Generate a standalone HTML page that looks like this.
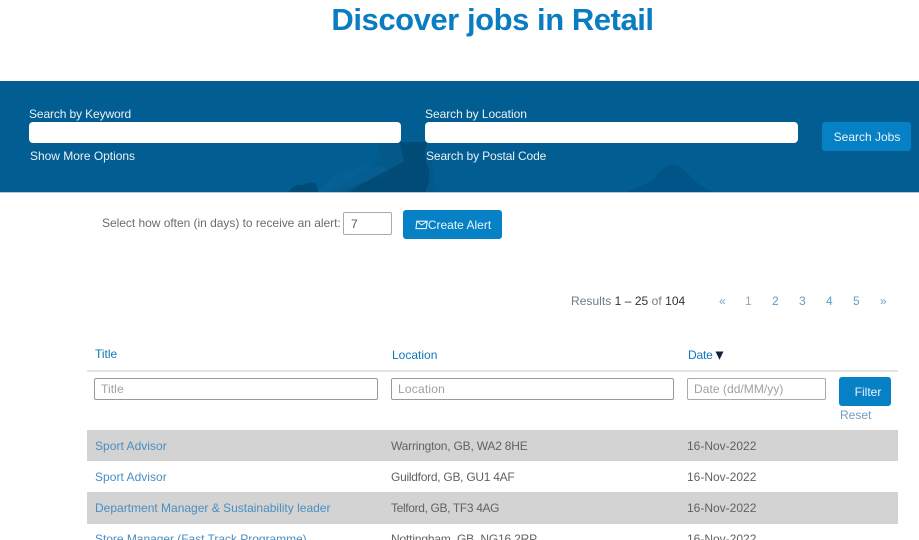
<!DOCTYPE html>
<html lang="en">
<head>
<meta charset="utf-8">
<title>Discover jobs in Retail</title>
<style>
html,body{margin:0;padding:0;background:#fff;width:919px;height:540px;overflow:hidden}
body{position:relative;font-family:"Liberation Sans",sans-serif;font-size:12px;color:#555}
.a{position:absolute;white-space:nowrap;line-height:16px}
.box{position:absolute;box-sizing:border-box}
.w{color:#e8f0f5}
.l{color:#4a8ec2}
.h{color:#0f78b8}
.p{color:#a0a0a0}
.d{color:#626262}
.btn{position:absolute;box-sizing:border-box;background:#0781c5;border-radius:3px;color:#eaf4fa;text-align:center}
.inp{position:absolute;box-sizing:border-box;background:#fff;border:1px solid #999;border-radius:2px}
.row{position:absolute;left:87px;width:811px;background:#d3d3d3}
</style>
</head>
<body>
<div class="a" style="left:0;width:985px;top:0;height:40px;line-height:40px;text-align:center;font-size:31px;font-weight:bold;color:#0a7dc2;letter-spacing:-.45px">Discover jobs in Retail</div>

<div class="box" style="left:0;top:81px;width:919px;height:112px;background:#025e92;overflow:hidden;border-bottom:1px solid #b8c8d4">
<svg width="919" height="111" style="position:absolute;left:0;top:0" viewBox="0 81 919 111">
<path d="M378 142 L430 142 L436 192 L330 192 C345 178 365 172 380 160Z" fill="#02527f" opacity=".4"/>
<path d="M330 178 C345 170 365 164 385 166 L392 176 C372 178 350 186 340 192 L318 192Z" fill="#0d6a9c" opacity=".3"/>
<path d="M400 142 L427 142 C425 150 424 156 426 162 C431 172 430 182 425 192 L350 192 C362 182 385 172 404 162 C403 155 401 150 400 142Z" fill="#023f68" opacity=".55"/>
<path d="M289 192 C292 186 298 184 304 185 C308 182 314 181 317 185 L318 192Z" fill="#023f68" opacity=".6"/>
<path d="M627 192 C640 186 648 183 655 178 C660 168 668 164 676 165 C684 168 690 176 696 182 C703 186 708 190 714 192Z" fill="#024f80" opacity=".6"/>
</svg>
</div>

<div class="a w" style="left:29px;top:106px;letter-spacing:-.12px">Search by Keyword</div>
<div class="box" style="left:29px;top:122px;width:372px;height:21px;background:#fff;border-radius:4px"></div>
<div class="a w" style="left:30px;top:148px;letter-spacing:-.02px">Show More Options</div>
<div class="a w" style="left:425px;top:106px;letter-spacing:-.05px">Search by Location</div>
<div class="box" style="left:425px;top:122px;width:373px;height:21px;background:#fff;border-radius:4px"></div>
<div class="a w" style="left:426px;top:148px;letter-spacing:-.12px">Search by Postal Code</div>
<div class="btn" style="left:822px;top:122px;width:89px;height:29px;line-height:30px;padding-left:1px">Search Jobs</div>

<div class="a d" style="left:102px;top:215px;color:#6c6c6c;letter-spacing:-.03px">Select how often (in days) to receive an alert:</div>
<div class="inp" style="left:343px;top:212px;width:49px;height:23px;padding-left:7px;line-height:23px;color:#555;border-color:#aaa">7</div>
<div class="btn" style="left:403px;top:210px;width:99px;height:29px;line-height:30px;padding-left:14px">Create Alert</div>
<svg width="13" height="10" viewBox="0 0 13 10" style="position:absolute;left:415px;top:220px"><path d="M1.8 1.2H12.2L11.2 8.6H1Z" fill="none" stroke="#eaf4fa" stroke-width="1.1"/><path d="M2 1.4L6.6 5L12 1.4" fill="none" stroke="#eaf4fa" stroke-width="1"/></svg>

<div class="a" style="left:571px;top:293px;color:#6e7a84;letter-spacing:.04px">Results <span style="color:#333">1 – 25</span> of <span style="color:#333">104</span></div>
<div class="a" style="left:719px;top:293px;color:#6ea4cc">«</div>
<div class="a" style="left:745px;top:293px;color:#8fa9bd">1</div>
<div class="a" style="left:772px;top:293px;color:#5f9cc8">2</div>
<div class="a" style="left:799px;top:293px;color:#5f9cc8">3</div>
<div class="a" style="left:826px;top:293px;color:#5f9cc8">4</div>
<div class="a" style="left:853px;top:293px;color:#5f9cc8">5</div>
<div class="a" style="left:880px;top:293px;color:#6ea4cc">»</div>

<div class="a h" style="left:95px;top:346px">Title</div>
<div class="a h" style="left:392px;top:347px">Location</div>
<div class="a h" style="left:688px;top:347px;letter-spacing:-.2px">Date</div>
<svg width="9" height="9" viewBox="0 0 9 9" style="position:absolute;left:715px;top:351px"><path d="M0.5 0.5H8.5L4.5 8.8Z" fill="#14233f"/></svg>
<div class="box" style="left:87px;top:370px;width:811px;height:2px;background:#e4e4e4"></div>

<div class="inp p" style="left:94px;top:378px;width:284px;height:22px;line-height:21px;padding-left:6px;letter-spacing:.1px">Title</div>
<div class="inp p" style="left:391px;top:378px;width:283px;height:22px;line-height:21px;padding-left:6px;letter-spacing:.2px">Location</div>
<div class="inp p" style="left:687px;top:378px;width:139px;height:22px;line-height:20px;padding-left:6px;border-color:#aaa;letter-spacing:.05px">Date (dd/MM/yy)</div>
<div class="btn" style="left:839px;top:377px;width:52px;height:29px;line-height:30px;padding-left:6px">Filter</div>
<div class="a" style="left:840px;top:407px;color:#6f9fc0">Reset</div>

<div class="row" style="top:430px;height:31px"></div>
<div class="a l" style="left:95px;top:438px;letter-spacing:.03px">Sport Advisor</div>
<div class="a d" style="left:391px;top:438px;letter-spacing:-.2px">Warrington, GB, WA2 8HE</div>
<div class="a d" style="left:687px;top:438px">16-Nov-2022</div>

<div class="a l" style="left:95px;top:469px;letter-spacing:.03px">Sport Advisor</div>
<div class="a d" style="left:391px;top:469px;letter-spacing:-.27px">Guildford, GB, GU1 4AF</div>
<div class="a d" style="left:687px;top:469px">16-Nov-2022</div>

<div class="row" style="top:492px;height:32px"></div>
<div class="a l" style="left:95px;top:500px">Department Manager &amp; Sustainability leader</div>
<div class="a d" style="left:391px;top:500px;letter-spacing:-.35px">Telford, GB, TF3 4AG</div>
<div class="a d" style="left:687px;top:500px">16-Nov-2022</div>

<div class="a l" style="left:95px;top:531px;letter-spacing:-.03px">Store Manager (Fast Track Programme)</div>
<div class="a d" style="left:391px;top:531px;letter-spacing:-.17px">Nottingham, GB, NG16 2RP</div>
<div class="a d" style="left:687px;top:531px">16-Nov-2022</div>
</body>
</html>
